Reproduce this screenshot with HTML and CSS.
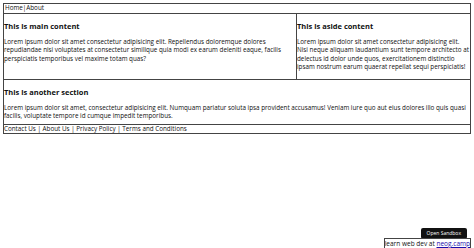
FILE: index.html
```
<!DOCTYPE html>
<html lang="en">
<head>
    <meta charset="UTF-8">
    <meta name="viewport" content="width=device-width, initial-scale=1.0">
    <title>Layout</title>
    <link rel="stylesheet" href="styles.css">
</head>
<body>
    <header class="header">
        <a href="#">Home</a>|<a href="#">About</a>
    </header>
    <div class="content">
        <main class="main">
            <h2>This is main content</h2>
            <p>Lorem ipsum dolor sit amet consectetur adipisicing elit. Repellendus doloremque dolores repudiandae nisi voluptates at consectetur similique quia modi ex earum deleniti eaque, facilis perspiciatis temporibus vel maxime totam quas?</p>
        </main>
        <aside class="aside">
            <h2>This is aside content</h2>
            <p>Lorem ipsum dolor sit amet consectetur adipisicing elit. Nisi neque aliquam laudantium sunt tempore architecto at delectus id dolor unde quos, exercitationem distinctio ipsam nostrum earum quaerat repellat sequi perspiciatis!</p>
        </aside>
    </div>
    <section class="section">
        <h2>This is another section</h2>
        <p>Lorem ipsum dolor sit amet, consectetur adipisicing elit. Numquam pariatur soluta ipsa provident accusamus! Veniam iure quo aut eius dolores illo quis quasi facilis, voluptate tempore id cumque impedit temporibus.</p>
    </section>
    <footer class="footer">
        <a href="#">Contact Us</a> | <a href="#">About Us</a> | <a href="#">Privacy Policy</a> | <a href="#">Terms and Conditions</a>
    </footer>

    <button class="sandbox">Open Sandbox</button>
    <div class="credit">learn web dev at <a href="#">neog.camp</a></div>
</body>
</html>
```
FILE: styles.css
```
body {
    font-family: "Open Sans", sans-serif;
    font-size: 6.3px;
    line-height: 8.5px;
    margin: 3px;
    color: #111;
}
a {
    color: inherit;
    text-decoration: none;
}
h2 {
    font-size: 7.5px;
    line-height: 8.5px;
    margin: 0 0 7.5px 0;
}
p {
    margin: 0;
}
.header {
    border: 1px solid #444;
    padding: 0 0 0 1px;
}
.content {
    display: grid;
    grid-template-columns: 293px 1fr;
    border: 1px solid #444;
    border-top: none;
}
.main {
    padding: 8px 1px 8px 0;
    border-right: 1px solid #444;
}
.aside {
    padding: 8px 0 7px 0;
}
.section {
    border: 1px solid #444;
    border-top: none;
    padding: 8px 0 3px;
}
.footer {
    border: 1px solid #444;
    border-top: none;
}
.sandbox {
    position: fixed;
    right: 7px;
    bottom: 9px;
    background: #111;
    color: #fff;
    border: none;
    border-radius: 2px;
    font-family: inherit;
    font-size: 5px;
    line-height: 7px;
    padding: 2px 6px;
}
.credit {
    position: fixed;
    right: 3px;
    bottom: -1px;
    border: 1px solid #444;
    background: #fff;
    padding: 0;
    font-size: 6.5px;
    line-height: 9px;
}
.credit a {
    color: #1a0dab;
    text-decoration: underline;
}
```
